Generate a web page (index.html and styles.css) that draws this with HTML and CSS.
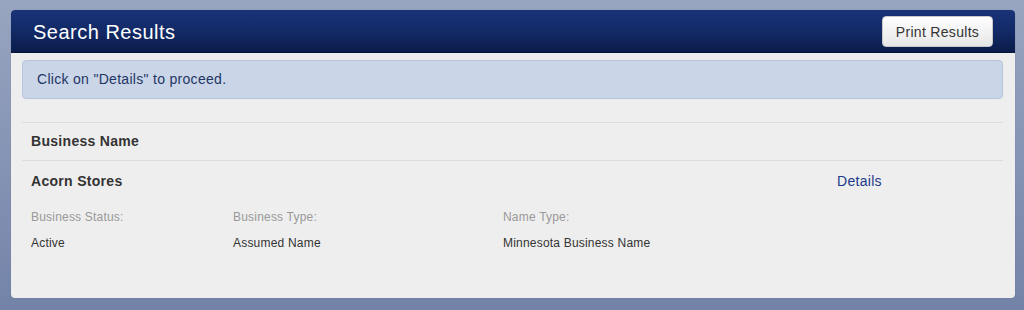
FILE: index.html
```html
<!DOCTYPE html>
<html>
<head>
<meta charset="utf-8">
<link rel="stylesheet" href="styles.css">
</head>
<body>
<div class="panel">
  <div class="panel-head">
    <h1 class="title">Search Results</h1>
    <button class="btn">Print Results</button>
  </div>
  <div class="panel-body">
    <div class="alert">Click on "Details" to proceed.</div>
    <div class="results">
      <div class="th">Business Name</div>
      <div class="row">
        <div class="name">Acorn Stores</div>
        <div></div>
        <div></div>
        <a class="details" href="#">Details</a>
        <div class="label">Business Status:</div>
        <div class="label">Business Type:</div>
        <div class="label">Name Type:</div>
        <div></div>
        <div class="value">Active</div>
        <div class="value">Assumed Name</div>
        <div class="value">Minnesota Business Name</div>
        <div></div>
      </div>
    </div>
  </div>
</div>
</body>
</html>
```

FILE: styles.css
```css
html, body {
  margin: 0;
  height: 310px;
}
body {
  font-family: "Liberation Sans", Arial, sans-serif;
  background: linear-gradient(to bottom, #98a5c0 0%, #8694b5 50%, #7383a8 100%);
  padding: 10px 9px 0 11px;
  box-sizing: border-box;
}
.panel {
  background: #eeeeee;
  border-radius: 4px;
  height: 288px;
  overflow: hidden;
  box-shadow: 0 0 1px rgba(0,0,0,0.3);
}
.panel-head {
  height: 43px;
  background: linear-gradient(to bottom, #1a3379 0%, #122a66 50%, #0b1c4a 100%);
  border-bottom: 1px solid #0a1638;
  box-sizing: border-box;
  display: flex;
  align-items: center;
  justify-content: space-between;
  padding: 0 22px 0 22px;
}
.title {
  margin: 0;
  color: #ffffff;
  font-size: 20px;
  font-weight: normal;
  line-height: 24px;
  letter-spacing: 0.5px;
  padding-top: 2px;
}
.btn {
  font-family: "Liberation Sans", Arial, sans-serif;
  font-size: 14px;
  letter-spacing: 0.3px;
  color: #333;
  height: 31px;
  width: 111px;
  margin-top: 1px;
  border: 1px solid #c8c8c8;
  border-radius: 4px;
  background: linear-gradient(to bottom, #ffffff 0%, #e6e6e6 100%);
  padding: 0;
}
.panel-body {
  padding: 7px 12px 0 11px;
}
.alert {
  height: 39px;
  box-sizing: border-box;
  background: #cad5e7;
  border: 1px solid #b6c4dd;
  border-radius: 4px;
  color: #1f3566;
  font-size: 14px;
  letter-spacing: 0.3px;
  line-height: 37px;
  padding-left: 14px;
}
.results {
  margin-top: 23px;
  border-top: 1px solid #dcdcdc;
}
.th {
  font-weight: bold;
  font-size: 14px;
  letter-spacing: 0.3px;
  color: #333;
  height: 37px;
  line-height: 37px;
  padding-left: 9px;
  border-bottom: 1px solid #dcdcdc;
}
.row {
  display: grid;
  grid-template-columns: 202px 270px 334px 1fr;
  padding-top: 10px;
}
.row > * {
  padding-left: 9px;
}
.name {
  font-weight: bold;
  font-size: 14px;
  letter-spacing: 0.3px;
  color: #333;
  line-height: 20px;
}
.details {
  color: #1d3a8a;
  text-decoration: none;
  font-size: 14px;
  letter-spacing: 0.3px;
  line-height: 20px;
}
.label {
  margin-top: 17px;
  font-size: 12px;
  letter-spacing: 0.2px;
  line-height: 18px;
  color: #999;
}
.value {
  margin-top: 8px;
  font-size: 12px;
  letter-spacing: 0.2px;
  line-height: 18px;
  color: #333;
}
```
